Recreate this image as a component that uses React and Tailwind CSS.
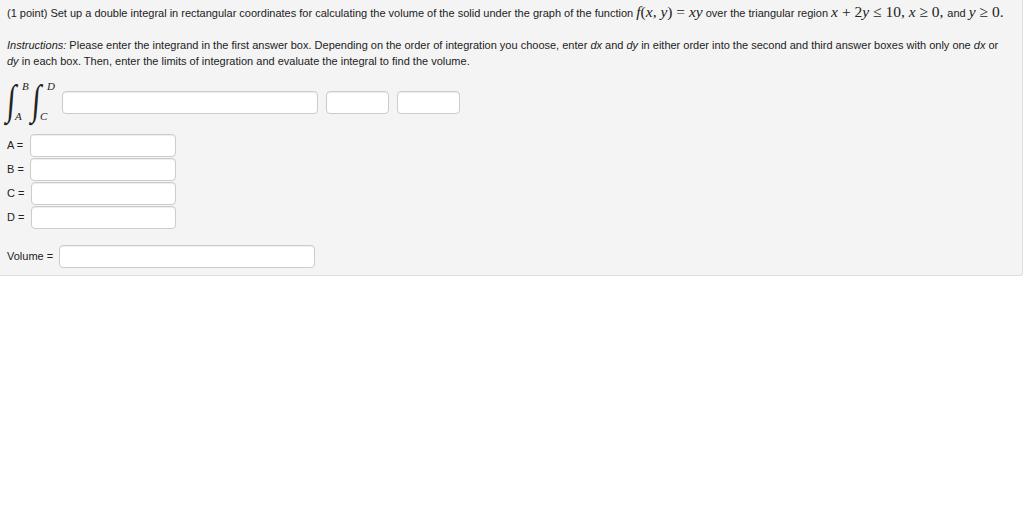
import React from "react";

const SERIF = '"Liberation Serif", "DejaVu Serif", serif';

const M = ({ children }) => (
  <span className="text-[15.5px] italic" style={{ fontFamily: SERIF }}>{children}</span>
);
const R = ({ children }) => (
  <span className="text-[15.5px] not-italic" style={{ fontFamily: SERIF }}>{children}</span>
);

const Box = ({ w }) => (
  <div className={`h-[23px] ${w} rounded-[4px] border border-[#cccccc] bg-white shadow-[inset_0_1px_1px_rgba(0,0,0,0.075)]`} />
);

const Int = ({ up, lo }) => (
  <div className="relative h-[34px] w-[25px]">
    <span className="absolute left-[1px] top-[-7px] text-[30px] italic leading-none scale-y-[1.4] -skew-x-6 origin-top inline-block" style={{ fontFamily: SERIF }}>∫</span>
    <span className="absolute left-[14px] top-[-5px] text-[11px] italic leading-none" style={{ fontFamily: SERIF }}>{up}</span>
    <span className="absolute left-[7px] top-[25px] text-[11px] italic leading-none" style={{ fontFamily: SERIF }}>{lo}</span>
  </div>
);

export default function App() {
  return (
    <div className="min-h-[511px] bg-white text-[#222] text-[11px]" style={{ fontFamily: '"Liberation Sans", Arial, sans-serif' }}>
      <div className="w-[1023px] h-[276px] bg-[#f4f4f4] border-r border-b border-[#dddddd] rounded-br-[3px] pl-[7px] pt-[4px]">
        <div className="leading-[16px] whitespace-nowrap">
          (1 point) Set up a double integral in rectangular coordinates for calculating the volume of the solid under the graph of the function{" "}
          <M>f</M><R>(</R><M>x</M><R>, </R><M>y</M><R>) = </R><M>xy</M> over the triangular region <M>x</M><R> + 2</R><M>y</M><R> ≤ 10, </R><M>x</M><R> ≥ 0, </R>and <M>y</M><R> ≥ 0.</R>
        </div>
        <div className="mt-[16px] leading-[16px] w-[1000px]">
          <i>Instructions:</i> Please enter the integrand in the first answer box. Depending on the order of integration you choose, enter <i>dx</i> and <i>dy</i> in either order into the second and third answer boxes with only one <i>dx</i> or <i>dy</i> in each box. Then, enter the limits of integration and evaluate the integral to find the volume.
        </div>
        <div className="mt-[15px] flex items-center">
          <div className="flex gap-[0px] ml-[1px] mt-[2px]">
            <Int up="B" lo="A" />
            <Int up="D" lo="C" />
          </div>
          <div className="ml-[4px] flex gap-[8px]">
            <Box w="w-[256px]" />
            <Box w="w-[63px]" />
            <Box w="w-[63px]" />
          </div>
        </div>
        <div className="mt-[14px] flex flex-col gap-[1px]">
          <div className="flex items-center"><span className="w-[23px]">A =</span><Box w="w-[146px]" /></div>
          <div className="flex items-center"><span className="w-[23px]">B =</span><Box w="w-[146px]" /></div>
          <div className="flex items-center"><span className="w-[24px]">C =</span><Box w="w-[145px]" /></div>
          <div className="flex items-center"><span className="w-[24px]">D =</span><Box w="w-[145px]" /></div>
        </div>
        <div className="mt-[16px] flex items-center">
          <span className="w-[52px]">Volume =</span><Box w="w-[256px]" />
        </div>
      </div>
    </div>
  );
}
